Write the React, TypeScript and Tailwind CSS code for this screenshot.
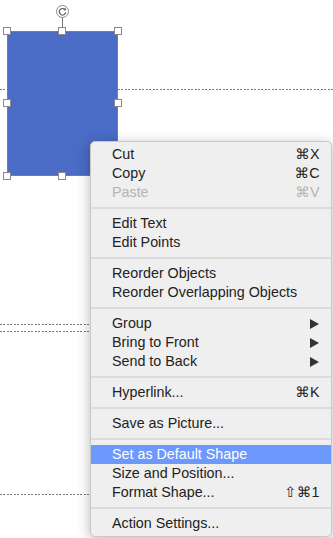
import type { ReactNode } from "react";

type Item = { label: string; key?: string; arrow?: boolean; disabled?: boolean; active?: boolean };

const GROUPS: Item[][] = [
  [
    { label: "Cut", key: "⌘X" },
    { label: "Copy", key: "⌘C" },
    { label: "Paste", key: "⌘V", disabled: true },
  ],
  [{ label: "Edit Text" }, { label: "Edit Points" }],
  [{ label: "Reorder Objects" }, { label: "Reorder Overlapping Objects" }],
  [
    { label: "Group", arrow: true },
    { label: "Bring to Front", arrow: true },
    { label: "Send to Back", arrow: true },
  ],
  [{ label: "Hyperlink...", key: "⌘K" }],
  [{ label: "Save as Picture..." }],
  [
    { label: "Set as Default Shape", active: true },
    { label: "Size and Position..." },
    { label: "Format Shape...", key: "⇧⌘1" },
  ],
  [{ label: "Action Settings..." }],
];

// handle offsets relative to the shape box (111 x 145)
const HANDLES: [number, number][] = [
  [0, 0], [55, 0], [111, 0],
  [0, 72], [111, 72],
  [0, 145], [55, 145], [111, 145],
];

function Dotted({ className }: { className: string }) {
  return <div className={`absolute h-px bg-[repeating-linear-gradient(to_right,#7a7a7a_0_2px,transparent_2px_3.5px)] ${className}`} />;
}

function Row({ item }: { item: Item }) {
  const color = item.active ? "text-white" : item.disabled ? "text-[#b4b4b4]" : "text-[#222]";
  let right: ReactNode = null;
  if (item.key) right = <span className="tracking-[0.5px]">{item.key}</span>;
  if (item.arrow)
    right = (
      <svg width="9" height="10" viewBox="0 0 9 10" className="mr-[1px]">
        <path d="M0 0 L9 5 L0 10 Z" fill="#333" />
      </svg>
    );
  return (
    <div className={`flex h-[19px] items-center justify-between pl-[21px] pr-[11px] text-[14.3px] ${color} ${item.active ? "bg-[#6d98fc]" : ""}`}>
      <span>{item.label}</span>
      {right}
    </div>
  );
}

export default function App() {
  return (
    <div className="relative h-[538px] w-[333px] overflow-hidden bg-white font-['Helvetica_Neue','Liberation_Sans','DejaVu_Sans',sans-serif]">
      {/* guides */}
      <Dotted className="left-0 top-[89px] w-[8px]" />
      <Dotted className="left-[118px] top-[89px] w-[215px]" />
      <Dotted className="left-0 top-[324px] w-[92px]" />
      <Dotted className="left-0 top-[331px] w-[92px]" />
      <Dotted className="left-0 top-[494px] w-[92px]" />

      {/* selected shape */}
      <div className="absolute left-[7px] top-[31px] h-[145px] w-[111px]">
        <div className="h-full w-full border-[1.5px] border-[#7d7d7d] bg-[#4a6cc6]" />
        <div className="absolute left-[55px] top-[-15px] h-[15px] w-px bg-[#777]" />
        <div className="absolute left-[49px] top-[-26px] grid h-[13px] w-[13px] place-items-center rounded-full border border-[#8a8a8a] bg-white">
          <svg width="9" height="9" viewBox="0 0 10 10">
            <path d="M8 3.2 A3.6 3.6 0 1 0 8.6 6" fill="none" stroke="#555" strokeWidth="1.3" />
            <path d="M8.8 0.8 L8.6 4 L5.6 3.4 Z" fill="#555" />
          </svg>
        </div>
        {HANDLES.map(([x, y]) => (
          <div key={`${x}-${y}`} className="absolute h-[8px] w-[8px] border border-[#8a8a8a] bg-white" style={{ left: x - 4, top: y - 4 }} />
        ))}
      </div>

      {/* context menu */}
      <div className="absolute left-[90px] top-[141px] w-[242px] rounded-[5px] border border-[#c8c8c8] bg-[#efefef] py-[3px] shadow-[0_3px_14px_rgba(0,0,0,0.28)]">
        {GROUPS.map((g, i) => (
          <div key={i}>
            {i > 0 && (
              <div className="flex h-[12px] items-center">
                <div className="h-[2px] w-full bg-[#dcdcdc]" />
              </div>
            )}
            {g.map((item) => (
              <Row key={item.label} item={item} />
            ))}
          </div>
        ))}
      </div>
    </div>
  );
}
